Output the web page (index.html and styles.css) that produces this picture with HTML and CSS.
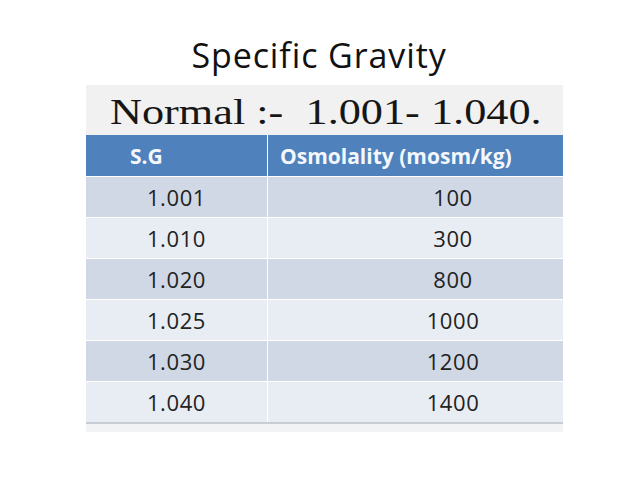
FILE: index.html
```html
<!DOCTYPE html>
<html>
<head>
<meta charset="utf-8">
<link rel="stylesheet" href="styles.css">
</head>
<body>
<div class="slide">
  <h1 class="title">Specific Gravity</h1>
  <div class="figure">
    <div class="normal"><span class="normal-text">Normal :-&nbsp; 1.001- 1.040.</span></div>
    <div class="table">
      <div class="row head"><div class="c1 hc1">S.G</div><div class="c2 hc2">Osmolality (mosm/kg)</div></div>
      <div class="row dark"><div class="c1">1.001</div><div class="c2">100</div></div>
      <div class="row light"><div class="c1">1.010</div><div class="c2">300</div></div>
      <div class="row dark"><div class="c1">1.020</div><div class="c2">800</div></div>
      <div class="row light"><div class="c1">1.025</div><div class="c2">1000</div></div>
      <div class="row dark"><div class="c1">1.030</div><div class="c2">1200</div></div>
      <div class="row light"><div class="c1">1.040</div><div class="c2">1400</div></div>
    </div>
    <div class="foot"></div>
  </div>
</div>
</body>
</html>
```

FILE: styles.css
```css
html, body {
  margin: 0;
  padding: 0;
  background: #ffffff;
}
.slide {
  width: 638px;
  height: 478px;
  display: flex;
  flex-direction: column;
  align-items: flex-start;
}
.title {
  margin: 0;
  width: 638px;
  text-align: center;
  font-family: "Open Sans", sans-serif;
  font-weight: 400;
  font-size: 34px;
  letter-spacing: 0.9px;
  line-height: 45px;
  padding-top: 33px;
  height: 52px;
  color: #111;
}
.figure {
  margin-left: 86px;
  width: 477px;
  background: #f1f1f1;
  display: flex;
  flex-direction: column;
}
.normal {
  height: 44px;
  padding-top: 6px;
  font-family: "Liberation Serif", serif;
  font-size: 35px;
  line-height: 44px;
  padding-left: 24px;
  color: #161616;
  white-space: nowrap;
}
.normal-text {
  display: inline-block;
  transform: scaleX(1.265);
  transform-origin: left center;
}
.table {
  display: flex;
  flex-direction: column;
  gap: 1px;
  background: #ffffff;
}
.row {
  display: grid;
  grid-template-columns: 181px 295px;
  column-gap: 1px;
  height: 40px;
  font-family: "Open Sans", sans-serif;
  font-size: 22px;
  letter-spacing: 0.6px;
  color: #222;
}
.row > div {
  display: flex;
  align-items: center;
}
.head { height: 41px; }
.head > div {
  background: #4f81bd;
  color: #f4f7fb;
  font-weight: 700;
  font-size: 21px;
  letter-spacing: 0;
}
.hc1 { padding-left: 44px; }
.hc2 { padding-left: 12px; }
.dark > div { background: #d0d8e6; }
.light > div { background: #e8ecf3; }
.c1:not(.hc1) { justify-content: center; }
.c2:not(.hc2) { justify-content: center; padding-left: 75px; }
.foot {
  height: 8px;
  border-top: 2px solid #c9cdd3;
  background: #f2f3f5;
}
```
